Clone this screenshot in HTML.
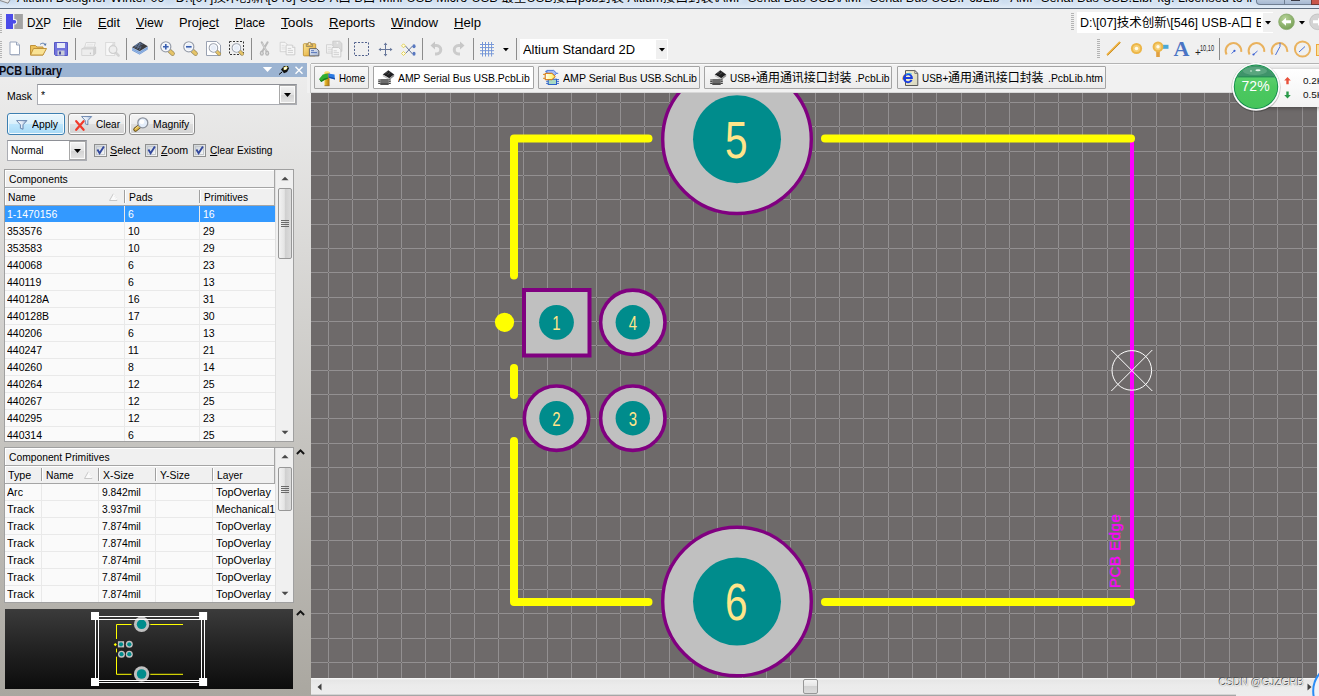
<!DOCTYPE html>
<html lang="zh"><head><meta charset="utf-8"><title>Altium Designer - PCB Library</title>
<style>
html,body{margin:0;padding:0}
body{width:1319px;height:696px;overflow:hidden;position:relative;background:#f0f0f0;font-family:"Liberation Sans","Noto Sans CJK SC",sans-serif;font-size:12px;color:#000}
.t{position:absolute;white-space:nowrap;line-height:16px;transform-origin:0 50%;display:block}
.abs{position:absolute}
svg{display:block;overflow:visible}
svg.cv{overflow:hidden}
svg text{font-family:"Liberation Sans","Noto Sans CJK SC",sans-serif}
u{text-decoration:underline;text-underline-offset:1px}
</style></head>
<body>
<div style="position:absolute;left:0px;top:0px;width:1319px;height:8px;background:linear-gradient(#c6d9ee,#e2ecf7);overflow:hidden"></div>
<div style="position:absolute;left:0px;top:8px;width:1319px;height:1px;background:#5f6e80"></div>
<div class="abs" style="left:0;top:0;width:1256px;height:8px;overflow:hidden"><span id="title" class="t" style="left:17px;top:-10.5px;font-size:12.5px;transform:scaleX(1.016);text-shadow:0 0 4px #fff,0 0 6px #fff">Altium Designer Winter 09 - D:\[07]技术创新\[546] USB-A口 B口 Mini-USB Micro-USB 最全USB接口pcb封装 Altium接口封装\AMP Serial Bus USB\AMP Serial Bus USB.PcbLib - AMP Serial Bus USB.LibPkg. Licensed to li</span></div>
<svg class="abs" style="left:0;top:0" width="14" height="7"><path d="M0 0.5L8 3.2L10 0" stroke="#888" fill="#e8e8e8" stroke-width="1"/></svg>
<div style="position:absolute;left:1256px;top:0px;width:29px;height:5px;background:linear-gradient(#b8c8dc,#a6b8d2);border:1px solid #6f7f93;border-top:none;border-radius:0 0 0 4px;box-sizing:border-box"></div>
<div style="position:absolute;left:1284px;top:0px;width:28px;height:5px;background:linear-gradient(#b8c8dc,#a6b8d2);border:1px solid #6f7f93;border-top:none;box-sizing:border-box"></div>
<div style="position:absolute;left:1311px;top:0px;width:12px;height:5px;background:#c8564a;border:1px solid #6f3a36;border-top:none;box-sizing:border-box"></div>
<div style="position:absolute;left:1291px;top:0px;width:9px;height:1px;background:#3a3a44"></div>
<svg class="abs" style="left:-1px;top:14px" width="3" height="19"><rect x="0" y="0" width="3" height="1" fill="#b4b4b4"/><rect x="0" y="2" width="3" height="1" fill="#b4b4b4"/><rect x="0" y="4" width="3" height="1" fill="#b4b4b4"/><rect x="0" y="6" width="3" height="1" fill="#b4b4b4"/><rect x="0" y="8" width="3" height="1" fill="#b4b4b4"/><rect x="0" y="10" width="3" height="1" fill="#b4b4b4"/><rect x="0" y="12" width="3" height="1" fill="#b4b4b4"/><rect x="0" y="14" width="3" height="1" fill="#b4b4b4"/><rect x="0" y="16" width="3" height="1" fill="#b4b4b4"/><rect x="0" y="18" width="3" height="1" fill="#b4b4b4"/></svg>
<svg class="abs" style="left:6px;top:14px" width="17" height="15"><rect x="8.3" y="0" width="8.6" height="15" fill="#a2a2a2"/><circle cx="8.4" cy="7.8" r="2.8" fill="#f4f4f4"/><rect x="0" y="0" width="7" height="15" fill="#4c4ce8"/><rect x="6.5" y="6.1" width="2.2" height="3.4" fill="#4c4ce8"/><circle cx="8.5" cy="7.8" r="1.7" fill="#4c4ce8"/></svg>
<span class="t" style="left:27.00px;top:14.77px;font-size:12.5px;transform:scaleX(0.9337);">D<u>X</u>P</span>
<span class="t" style="left:63.00px;top:14.77px;font-size:12.5px;transform:scaleX(0.9433);"><u>F</u>ile</span>
<span class="t" style="left:98.00px;top:14.77px;font-size:12.5px;transform:scaleX(1.0214);"><u>E</u>dit</span>
<span class="t" style="left:136.00px;top:14.77px;font-size:12.5px;transform:scaleX(1.0049);"><u>V</u>iew</span>
<span class="t" style="left:179.00px;top:14.77px;font-size:12.5px;transform:scaleX(1.0281);">Proje<u>c</u>t</span>
<span class="t" style="left:235.00px;top:14.77px;font-size:12.5px;transform:scaleX(0.9594);"><u>P</u>lace</span>
<span class="t" style="left:281.00px;top:14.77px;font-size:12.5px;transform:scaleX(1.0966);"><u>T</u>ools</span>
<span class="t" style="left:329.00px;top:14.77px;font-size:12.5px;transform:scaleX(1.0510);"><u>R</u>eports</span>
<span class="t" style="left:391.00px;top:14.77px;font-size:12.5px;transform:scaleX(1.0572);"><u>W</u>indow</span>
<span class="t" style="left:454.00px;top:14.77px;font-size:12.5px;transform:scaleX(1.0502);"><u>H</u>elp</span>
<svg class="abs" style="left:-1px;top:41px" width="3" height="18"><rect x="0" y="0" width="3" height="1" fill="#b4b4b4"/><rect x="0" y="2" width="3" height="1" fill="#b4b4b4"/><rect x="0" y="4" width="3" height="1" fill="#b4b4b4"/><rect x="0" y="6" width="3" height="1" fill="#b4b4b4"/><rect x="0" y="8" width="3" height="1" fill="#b4b4b4"/><rect x="0" y="10" width="3" height="1" fill="#b4b4b4"/><rect x="0" y="12" width="3" height="1" fill="#b4b4b4"/><rect x="0" y="14" width="3" height="1" fill="#b4b4b4"/><rect x="0" y="16" width="3" height="1" fill="#b4b4b4"/></svg>
<svg class="abs" style="left:9px;top:41px" width="12" height="15"><path d="M1 1h6.5l3 3v9.5h-9.5z" fill="#fff" stroke="#9aa6bc"/><path d="M7.5 1v3h3" fill="#e4eaf4" stroke="#9aa6bc"/><path d="M2 14.3h9" stroke="#c8ccd4"/></svg>
<svg class="abs" style="left:30px;top:42px" width="17" height="14"><path d="M0.5 13V3.5h5l1.5 1.5h6V13z" fill="#ecc058" stroke="#c0923a"/><path d="M0.5 13l3-6.5h13L13 13z" fill="#f9e294" stroke="#c0923a"/><path d="M10 2.5c2-2 4.5-1.5 5.5.5" stroke="#5577aa" fill="none"/><path d="M16.3 1l-.3 2.8-2.5-.8z" fill="#5577aa"/></svg>
<svg class="abs" style="left:54px;top:42px" width="14" height="14"><path d="M0.5 0.5h13v13h-12l-1-1z" fill="#7274dc" stroke="#5658c4"/><rect x="3" y="1" width="8" height="5" fill="#e8ecf8"/><rect x="3.5" y="8.5" width="7" height="5" fill="#c8ccd8"/><rect x="5" y="9.5" width="2" height="3" fill="#4a4fa0"/></svg>
<div style="position:absolute;left:75px;top:38px;width:1px;height:22px;background:#8c8c8c"></div>
<svg class="abs" style="left:81px;top:42px" width="16" height="15"><path d="M5 0.5H14.4L12.6 6.1H3.5z" fill="#f6f6f6" stroke="#d2d2d2" stroke-width="0.8"/><path d="M6 2.2h6.5M5.4 4h6.5" stroke="#dcdcdc" stroke-width="0.7"/><path d="M0.8 7L3.5 5.2H14.7L12.6 7z" fill="#e2e2e2" stroke="#cacaca" stroke-width="0.6"/><path d="M12.6 7L14.7 5.2V11.6L12.6 13.4z" fill="#d2d2d2" stroke="#c6c6c6" stroke-width="0.6"/><rect x="0.8" y="7" width="11.8" height="6.4" fill="#ededed" stroke="#cccccc" stroke-width="0.7"/><rect x="8.9" y="10.6" width="0.8" height="1.6" fill="#b0b0b0"/></svg>
<svg class="abs" style="left:105px;top:42px" width="16" height="15"><rect x="0.7" y="0.5" width="9.1" height="13" fill="#f7f7f7" stroke="#d6d6d6" stroke-width="0.8"/><path d="M11 10.8L13.6 13.6" stroke="#d4d4d4" stroke-width="2.6" stroke-linecap="round"/><circle cx="8" cy="7.6" r="3.9" fill="#eeeeee" stroke="#cdcdcd" stroke-width="1.2"/><circle cx="8.3" cy="2.4" r="1" fill="#e0e0e0" stroke="#d0d0d0" stroke-width="0.5"/></svg>
<div style="position:absolute;left:126px;top:38px;width:1px;height:22px;background:#8c8c8c"></div>
<svg class="abs" style="left:131px;top:41px" width="18" height="15"><path d="M1.1 6.2L8.6 10.2L16.8 5.3V8L8.6 13.2L1.1 9.2z" fill="#a4c2ea"/><path d="M1.1 7.6L8.6 11.6L16.8 6.7M1.1 9.2L8.6 13.2L16.8 8" stroke="#6d97d4" stroke-width="0.8" fill="none"/><path d="M1.1 6.2L9.2 0.8L16.8 5.3L8.6 10.2z" fill="#3a3b40"/><path d="M3 5L10.6 1.6M4.8 6L12.2 2.6M6.6 7L9.5 5.6M3.3 7.4L7 1.9M5.6 8.6L9.4 2M7.8 9.6L10.2 5.6" stroke="#7ea6e0" stroke-width="0.55" opacity="0.85"/></svg>
<div style="position:absolute;left:154px;top:38px;width:1px;height:22px;background:#8c8c8c"></div>
<svg class="abs" style="left:160px;top:41px" width="15" height="15"><path d="M9.6 9.8l3 2.9" stroke="#9a8a5a" stroke-width="4.4" stroke-linecap="round"/><path d="M9.6 9.8l3 2.9" stroke="#e6c468" stroke-width="3" stroke-linecap="round"/><circle cx="5.8" cy="5.8" r="5" fill="#e8eef8" stroke="#9aa0ac" stroke-width="1.3"/><circle cx="5.8" cy="5.8" r="3.9" fill="none" stroke="#fff" stroke-width="0.9"/><path d="M3 5.8h5.6M5.8 3v5.6" stroke="#3a5fb0" stroke-width="1.6"/></svg>
<svg class="abs" style="left:183px;top:41px" width="15" height="15"><path d="M9.6 9.8l3 2.9" stroke="#9a8a5a" stroke-width="4.4" stroke-linecap="round"/><path d="M9.6 9.8l3 2.9" stroke="#e6c468" stroke-width="3" stroke-linecap="round"/><circle cx="5.8" cy="5.8" r="5" fill="#e8eef8" stroke="#9aa0ac" stroke-width="1.3"/><circle cx="5.8" cy="5.8" r="3.9" fill="none" stroke="#fff" stroke-width="0.9"/><path d="M3 5.8h5.6" stroke="#3a5fb0" stroke-width="1.6"/></svg>
<svg class="abs" style="left:206px;top:41px" width="16" height="15"><path d="M0.5 0.5h10l4 3.5v10.5h-14z" fill="#fff" stroke="#9aa2b2"/><g transform="translate(2.5,2) scale(0.85)"><path d="M9.6 9.8l3 2.9" stroke="#9a8a5a" stroke-width="4.4" stroke-linecap="round"/><path d="M9.6 9.8l3 2.9" stroke="#e6c468" stroke-width="3" stroke-linecap="round"/><circle cx="5.8" cy="5.8" r="5" fill="#e8eef8" stroke="#9aa0ac" stroke-width="1.3"/><circle cx="5.8" cy="5.8" r="3.9" fill="none" stroke="#fff" stroke-width="0.9"/></g></svg>
<svg class="abs" style="left:229px;top:41px" width="16" height="15"><rect x="0.5" y="0.5" width="14" height="13" fill="none" stroke="#333" stroke-dasharray="2 1.5"/><g transform="translate(2.5,2) scale(0.85)"><path d="M9.6 9.8l3 2.9" stroke="#9a8a5a" stroke-width="4.4" stroke-linecap="round"/><path d="M9.6 9.8l3 2.9" stroke="#e6c468" stroke-width="3" stroke-linecap="round"/><circle cx="5.8" cy="5.8" r="5" fill="#e8eef8" stroke="#9aa0ac" stroke-width="1.3"/><circle cx="5.8" cy="5.8" r="3.9" fill="none" stroke="#fff" stroke-width="0.9"/></g></svg>
<div style="position:absolute;left:251px;top:38px;width:1px;height:22px;background:#8c8c8c"></div>
<svg class="abs" style="left:259px;top:41px" width="12" height="16"><path d="M2.7 1.3L7.9 11M8.6 1.3L3 11" stroke="#bababa" stroke-width="2" stroke-linecap="round"/><path d="M3.2 2.2L7.4 10" stroke="#e4e4e4" stroke-width="0.6"/><ellipse cx="2.8" cy="12.2" rx="2" ry="2.6" fill="#b6b6b6"/><ellipse cx="8.2" cy="12.2" rx="2" ry="2.6" fill="#b6b6b6"/><ellipse cx="2.8" cy="12.3" rx="0.8" ry="1.3" fill="#dcdcdc"/><ellipse cx="8.2" cy="12.3" rx="0.8" ry="1.3" fill="#dcdcdc"/></svg>
<svg class="abs" style="left:279px;top:41px" width="17" height="16"><path d="M1.2 1.3H6L8.1 3.4V10.7H1.2z" fill="#f5f5f5" stroke="#cbcbcb" stroke-width="0.8"/><path d="M2.6 4.4h3M2.6 6.2h4M2.6 8h4" stroke="#d6d6d6" stroke-width="0.7"/><path d="M7.1 4.1H13.4L15.8 6.5V13.8H7.1z" fill="#f7f7f7" stroke="#c4c4c4" stroke-width="0.8"/><path d="M13.4 4.1V6.5H15.8" fill="#e6e6e6" stroke="#c4c4c4" stroke-width="0.6"/><path d="M8.8 7.4h3.4M8.8 9.4h5.2M8.8 11.4h5.2" stroke="#c6c6c6" stroke-width="0.8"/></svg>
<svg class="abs" style="left:303px;top:41px" width="17" height="16"><defs><linearGradient id="pg" x1="0" y1="0" x2="1" y2="1"><stop offset="0" stop-color="#fde694"/><stop offset="1" stop-color="#dfa42e"/></linearGradient><linearGradient id="pd" x1="0" y1="0" x2="1" y2="1"><stop offset="0" stop-color="#eef2fa"/><stop offset="1" stop-color="#a4b4d0"/></linearGradient></defs><rect x="0.4" y="2.7" width="12.3" height="12.2" rx="0.8" fill="url(#pg)" stroke="#b98c2c" stroke-width="0.8"/><path d="M3.3 5.5V3.4H4.8L5.4 1.4H7.6L8.2 3.4H9.6V5.5z" fill="#e0b656" stroke="#8c7c5c" stroke-width="0.7"/><circle cx="6.5" cy="3" r="0.8" fill="#fff"/><path d="M6.4 7.6H13.6L15.9 9.8V14.9H6.4z" fill="url(#pd)" stroke="#5c5c60" stroke-width="0.9"/><path d="M8 9.7h3M8 11.6h6" stroke="#4a6ab4" stroke-width="0.9"/></svg>
<svg class="abs" style="left:326px;top:40px" width="17" height="18"><path d="M6.8 1.2H13.6L15.9 3.4V11.3H6.8z" fill="#dadada" stroke="#c6c6c6" stroke-width="0.8"/><circle cx="11.4" cy="2.8" r="0.9" fill="#f4f4f4"/><path d="M0.5 4.7H5.6L7.5 6.6V13.1H0.5z" fill="#f2f2f2" stroke="#cccccc" stroke-width="0.8"/><path d="M1.8 7.6h3M1.8 9.4h4.2M1.8 11.2h4.2" stroke="#d4d4d4" stroke-width="0.7"/><path d="M6.1 7.5H12.6L14.8 9.7V16.9H6.1z" fill="#f6f6f6" stroke="#c4c4c4" stroke-width="0.8"/><path d="M7.6 10.8h3.2M7.6 12.7h5.4M7.6 14.6h5.4" stroke="#c8c8c8" stroke-width="0.8"/></svg>
<div style="position:absolute;left:348px;top:38px;width:1px;height:22px;background:#8c8c8c"></div>
<svg class="abs" style="left:354px;top:42px" width="16" height="15"><rect x="0.5" y="0.5" width="14" height="13" fill="none" stroke="#50608c" stroke-dasharray="2 1.5"/></svg>
<svg class="abs" style="left:378px;top:41.5px" width="15" height="15"><path d="M7.5 1.5v12M1.5 7.5h12" stroke="#66769a" stroke-width="1"/><path d="M7.5 0.5l1.8 2.4h-3.6zM7.5 14.5l1.8-2.4h-3.6zM0.5 7.5l2.4-1.8v3.6zM14.5 7.5l-2.4-1.8v3.6z" fill="#66769a"/></svg>
<svg class="abs" style="left:400.5px;top:42.5px" width="16" height="15"><path d="M4.5 3l7 8M4.5 10.5l7-7.5" stroke="#66769a" stroke-width="1"/><path d="M2.5 0.8l2 2-2 2-2-2zM2.5 8.5l2 2-2 2-2-2z" fill="#fffbe0" stroke="#dcc838" stroke-width="0.8"/><ellipse cx="13" cy="3.2" rx="1.6" ry="2" fill="#5878c0"/><ellipse cx="13" cy="10.8" rx="1.6" ry="2" fill="#5878c0"/></svg>
<div style="position:absolute;left:422px;top:38px;width:1px;height:22px;background:#8c8c8c"></div>
<svg class="abs" style="left:430px;top:41.2px" width="12" height="14"><g opacity="0.8"><path d="M3 4.5h3.5a4 4 0 0 1 0 8.5H5" fill="none" stroke="#c2c2c2" stroke-width="3"/><path d="M0.5 4.5l4.5-4v8z" fill="#bdbdbd"/></g></svg>
<svg class="abs" style="left:453px;top:41.2px" width="12" height="14"><g opacity="0.8" transform="translate(12,0) scale(-1,1)"><path d="M3 4.5h3.5a4 4 0 0 1 0 8.5H5" fill="none" stroke="#c2c2c2" stroke-width="3"/><path d="M0.5 4.5l4.5-4v8z" fill="#bdbdbd"/></g></svg>
<div style="position:absolute;left:473px;top:38px;width:1px;height:22px;background:#8c8c8c"></div>
<svg class="abs" style="left:480px;top:42px" width="15" height="15"><rect x="0.5" y="0.5" width="13" height="13" fill="#fffdf2"/><path d="M2.5 0v14.5M5.5 0v14.5M8.6 0v14.5M11.6 0v14.5M0 2.5h14M0 5.6h14M0 8.7h14M0 11.8h14" stroke="#7696d8" stroke-width="1"/></svg>
<svg class="abs" style="left:502.6px;top:48px" width="6" height="4"><path d="M0 0h5.8l-2.9 3.2z" fill="#000"/></svg>
<div style="position:absolute;left:516px;top:38px;width:1px;height:22px;background:#8c8c8c"></div>
<div style="position:absolute;left:520px;top:39px;width:148px;height:21px;background:#fff"></div>
<span class="t" style="left:522.50px;top:41.57px;font-size:12.5px;transform:scaleX(1.0333);">Altium Standard 2D</span>
<div style="position:absolute;left:656px;top:40px;width:11px;height:19px;background:#f0f0f0"></div>
<svg class="abs" style="left:658.5px;top:48px" width="7" height="4"><path d="M0 0h6l-3 3.5z" fill="#000"/></svg>
<svg class="abs" style="left:1071px;top:13px" width="3" height="18"><rect x="0" y="0" width="3" height="1" fill="#b4b4b4"/><rect x="0" y="2" width="3" height="1" fill="#b4b4b4"/><rect x="0" y="4" width="3" height="1" fill="#b4b4b4"/><rect x="0" y="6" width="3" height="1" fill="#b4b4b4"/><rect x="0" y="8" width="3" height="1" fill="#b4b4b4"/><rect x="0" y="10" width="3" height="1" fill="#b4b4b4"/><rect x="0" y="12" width="3" height="1" fill="#b4b4b4"/><rect x="0" y="14" width="3" height="1" fill="#b4b4b4"/><rect x="0" y="16" width="3" height="1" fill="#b4b4b4"/></svg>
<div style="position:absolute;left:1077px;top:12px;width:196px;height:21px;background:#fff"></div>
<div class="abs" style="left:1077px;top:12px;width:184px;height:21px;overflow:hidden"><span class="t" style="left:3.00px;top:2.57px;font-size:12.5px;">D:\[07]技术创新\[546] USB-A口 B口</span></div>
<div style="position:absolute;left:1263px;top:13px;width:10px;height:19px;background:#f0f0f0"></div>
<svg class="abs" style="left:1264.5px;top:20.5px" width="6" height="4"><path d="M0 0h6l-3 3.5z" fill="#000"/></svg>
<svg class="abs" style="left:1277.6px;top:13.2px" width="17" height="17"><defs><radialGradient id="gb" cx="0.4" cy="0.3" r="0.8"><stop offset="0" stop-color="#b8d49a"/><stop offset="1" stop-color="#6f9a4e"/></radialGradient></defs><circle cx="8.5" cy="8.8" r="7.8" fill="url(#gb)" stroke="#86a86a" stroke-width="0.8"/><path d="M3.5 8.8l4.5-4v2.5h5v3H8v2.5z" fill="#fff"/></svg>
<svg class="abs" style="left:1298.6px;top:20.5px" width="6" height="4"><path d="M0 0h6l-3 3.5z" fill="#000"/></svg>
<svg class="abs" style="left:1309px;top:13.2px" width="11" height="17"><circle cx="8.5" cy="8.8" r="7.8" fill="#d4d4d4" stroke="#bcbcbc" stroke-width="0.8"/><path d="M13.5 8.8l-4.5-4v2.5h-5v3h5v2.5z" fill="#fff"/></svg>
<svg class="abs" style="left:1097px;top:39px" width="3" height="19"><rect x="0" y="0" width="3" height="1" fill="#b4b4b4"/><rect x="0" y="2" width="3" height="1" fill="#b4b4b4"/><rect x="0" y="4" width="3" height="1" fill="#b4b4b4"/><rect x="0" y="6" width="3" height="1" fill="#b4b4b4"/><rect x="0" y="8" width="3" height="1" fill="#b4b4b4"/><rect x="0" y="10" width="3" height="1" fill="#b4b4b4"/><rect x="0" y="12" width="3" height="1" fill="#b4b4b4"/><rect x="0" y="14" width="3" height="1" fill="#b4b4b4"/><rect x="0" y="16" width="3" height="1" fill="#b4b4b4"/><rect x="0" y="18" width="3" height="1" fill="#b4b4b4"/></svg>
<svg class="abs" style="left:1106px;top:41px" width="15" height="15"><path d="M1 14L14 1" stroke="#eeb040" stroke-width="2"/><path d="M1.5 14.5L14.5 1.5" stroke="#b07810" stroke-width="0.6"/></svg>
<svg class="abs" style="left:1129.5px;top:42.3px" width="13" height="13"><circle cx="6.5" cy="6.5" r="5.6" fill="#ecb648"/><circle cx="6.5" cy="6.5" r="3.6" fill="#f6d078"/><circle cx="6.5" cy="6.5" r="1.8" fill="#fffbea"/></svg>
<svg class="abs" style="left:1151.5px;top:41px" width="18" height="16"><rect x="4.2" y="9" width="3.6" height="7" fill="#e0a040"/><rect x="9" y="3.8" width="7.5" height="4" fill="#4aa8d8"/><circle cx="6" cy="5.8" r="5.4" fill="#ecb648"/><circle cx="6" cy="5.8" r="3.4" fill="#f6d078"/><circle cx="6" cy="5.8" r="1.7" fill="#fffbea"/></svg>
<span class="t" style="left:1173.50px;top:37.18px;font-size:22px;color:#4a74c4;font-weight:bold;line-height:24px;font-family:'Liberation Serif',serif;">A</span>
<span class="t" style="left:1195.00px;top:45.33px;font-size:10px;color:#222;">+</span>
<span class="t" style="left:1200.30px;top:40.25px;font-size:8.5px;transform:scaleX(0.6582);color:#222;">10,10</span>
<div style="position:absolute;left:1219px;top:38px;width:1px;height:22px;background:#8c8c8c"></div>
<svg class="abs" style="left:1224.3px;top:40.5px" width="19" height="18"><path d="M2.6 13.6A7.8 7.8 0 1 1 17.2 10.8" fill="none" stroke="#e9b25e" stroke-width="2"/><path d="M7.5 12.5L10.5 9.8" stroke="#4a6fd8" stroke-width="1"/><circle cx="10.5" cy="9.8" r="1.1" fill="#3a5fd0"/></svg>
<svg class="abs" style="left:1247.3px;top:40.5px" width="19" height="18"><path d="M2.6 13.6A7.8 7.8 0 1 1 17.2 10.8" fill="none" stroke="#e9b25e" stroke-width="2"/><path d="M6.5 13.5L10.5 10" stroke="#4a6fd8" stroke-width="1"/><circle cx="6.5" cy="13.5" r="1.1" fill="#3a5fd0"/></svg>
<svg class="abs" style="left:1270.3px;top:40.5px" width="19" height="18"><path d="M2.6 13.6A7.8 7.8 0 1 1 17.2 10.8" fill="none" stroke="#e9b25e" stroke-width="2"/><path d="M5.5 14L10 5.5" stroke="#4a6fd8" stroke-width="1"/><path d="M10 5.5V1.8" stroke="#4a6fd8" stroke-width="1"/></svg>
<svg class="abs" style="left:1292.8px;top:40px" width="19" height="18"><circle cx="9.5" cy="9" r="7.6" fill="none" stroke="#e9b25e" stroke-width="2"/><path d="M6 12L12 6.5" stroke="#4a6fd8" stroke-width="1"/></svg>
<svg class="abs" style="left:1316px;top:44px" width="3" height="12"><rect x="0.5" y="0.5" width="6" height="11" fill="#f8e0a0" stroke="#eea83c"/></svg>
<div style="position:absolute;left:0px;top:63px;width:311px;height:633px;background:linear-gradient(#eeeeee,#aaa7a0)"></div>
<div style="position:absolute;left:307px;top:63px;width:4px;height:30px;background:#f1f1f1"></div>
<div style="position:absolute;left:310px;top:64px;width:1px;height:29px;background:#c9c9c9"></div>
<div style="position:absolute;left:0px;top:63px;width:307px;height:14px;background:#9cb4d2"></div>
<span class="t" style="left:-1.50px;top:62.57px;font-size:12.5px;transform:scaleX(0.8721);color:#0a0a14;font-weight:bold;">PCB Library</span>
<svg class="abs" style="left:262px;top:66.2px" width="42" height="11"><path d="M0.8 1h9.4L5.5 6z" fill="#fff"/><path d="M33.5 0.8l7 7M40.5 0.8l-7 7" stroke="#fff" stroke-width="1.4"/><g transform="translate(17,-1)"><path d="M0 9.5L3 7" stroke="#000" stroke-width="1"/><path d="M2 4.5l3-3.5h4l1 2.5-2 3.5-3 1.2z" fill="#111"/><path d="M4.5 2.2l3-1.2 1.3 1.6-1.5 2.2-2.6.4z" fill="#e8e070"/><path d="M5 2.8l2.2-.8.8 1-1 1.3-1.8.2z" fill="#fff"/></g></svg>
<span class="t" style="left:7.00px;top:87.89px;font-size:11px;transform:scaleX(0.9512);">Mask</span>
<div style="position:absolute;left:37px;top:84px;width:260px;height:21px;box-sizing:border-box;border:1px solid #abadb3;border-top-color:#8e9096;background:#fff"></div>
<span class="t" style="left:41.00px;top:86.69px;font-size:11px;transform:scaleX(0.9500);">*</span>
<div style="position:absolute;left:279px;top:85px;width:17px;height:19px;box-sizing:border-box;border:1px solid #a8a8a8;background:linear-gradient(#f4f4f4,#e2e2e2 50%,#d2d2d2 51%,#e4e4e4);box-shadow:inset 0 0 0 1px #fafafa"></div>
<svg class="abs" style="left:284px;top:93px" width="7" height="4"><path d="M0 0h7l-3.5 4z" fill="#000"/></svg>
<div style="position:absolute;left:7px;top:113px;width:58px;height:22px;box-sizing:border-box;border:1px solid #3c7fb1;border-radius:3px;background:linear-gradient(#eaf6fd,#d9f0fc 48%,#bee6fd 52%,#a7d9f5);box-shadow:inset 0 0 0 1px #f4fbfe;"></div>
<div style="position:absolute;left:68px;top:113px;width:58px;height:22px;box-sizing:border-box;border:1px solid #8a8a8a;border-radius:3px;background:linear-gradient(#f4f4f4,#ececec 48%,#dedede 52%,#d2d2d2);box-shadow:inset 0 0 0 1px #fbfbfb;"></div>
<div style="position:absolute;left:129px;top:113px;width:66px;height:22px;box-sizing:border-box;border:1px solid #8a8a8a;border-radius:3px;background:linear-gradient(#f4f4f4,#ececec 48%,#dedede 52%,#d2d2d2);box-shadow:inset 0 0 0 1px #fbfbfb;"></div>
<span class="t" style="left:32.00px;top:116.09px;font-size:11px;transform:scaleX(0.9449);">Apply</span>
<span class="t" style="left:96.30px;top:116.09px;font-size:11px;transform:scaleX(0.9130);">Clear</span>
<span class="t" style="left:152.50px;top:116.09px;font-size:11px;transform:scaleX(0.9424);">Magnify</span>
<svg class="abs" style="left:0;top:0" width="0" height="0"><defs><linearGradient id="fg" x1="0" x2="1"><stop offset="0" stop-color="#ffffff"/><stop offset="0.55" stop-color="#dfe9f6"/><stop offset="1" stop-color="#8fabd2"/></linearGradient></defs></svg>
<svg class="abs" style="left:16px;top:120.3px" width="12" height="11"><path d="M0.6 0.6h10.3L7 4.8v4.4l-2.6-.9V4.8z" fill="url(#fg)" stroke="#5c7aa6" stroke-width="0.9" stroke-linejoin="round"/></svg>
<svg class="abs" style="left:81px;top:116px" width="12" height="10"><g transform="scale(0.98 0.95)"><path d="M0.6 0.6h10.3L7 4.8v4.4l-2.6-.9V4.8z" fill="url(#fg)" stroke="#5c7aa6" stroke-width="0.9" stroke-linejoin="round"/></g></svg>
<svg class="abs" style="left:74.5px;top:119.6px" width="10" height="11"><path d="M1.2 1.2L8.6 9.8M8.6 1.2L1.2 9.8" stroke="#f03a2c" stroke-width="2.2" stroke-linecap="round"/></svg>
<svg class="abs" style="left:133px;top:116px" width="17" height="16"><path d="M6.4 10.3L2.4 13.5" stroke="#5a4410" stroke-width="4.2" stroke-linecap="round"/><path d="M6.6 10.1L2.6 13.3" stroke="#e0b848" stroke-width="2.8" stroke-linecap="round"/><path d="M6.2 9.6L2.6 12.4" stroke="#f6e29a" stroke-width="0.9" stroke-linecap="round"/><circle cx="9.8" cy="6.8" r="5" fill="#e4eefb" stroke="#8c929c" stroke-width="1.3"/><circle cx="9" cy="5.8" r="2.4" fill="#ffffff"/></svg>
<div style="position:absolute;left:7px;top:140px;width:80px;height:21px;box-sizing:border-box;border:1px solid #abadb3;border-top-color:#8e9096;background:#fff"></div>
<span class="t" style="left:10.60px;top:141.89px;font-size:11px;transform:scaleX(0.9168);">Normal</span>
<div style="position:absolute;left:69px;top:141px;width:17px;height:19px;box-sizing:border-box;border:1px solid #a8a8a8;background:linear-gradient(#f4f4f4,#e2e2e2 50%,#d2d2d2 51%,#e4e4e4);box-shadow:inset 0 0 0 1px #fafafa"></div>
<svg class="abs" style="left:74px;top:149px" width="7" height="4"><path d="M0 0h7l-3.5 4z" fill="#000"/></svg>
<div style="position:absolute;left:94px;top:144px;width:13px;height:13px;box-sizing:border-box;border:1px solid #8e8f8f;background:linear-gradient(135deg,#d0d4d8,#f4f5f6);"></div><div style="position:absolute;left:96px;top:146px;width:9px;height:9px;box-sizing:border-box;border:1px solid #c4c8cc;background:linear-gradient(135deg,#cfd5da,#f6f7f8)"></div><svg class="abs" style="left:96px;top:146px" width="9" height="9"><path d="M1.4 3.6L3.6 7.2L7.9 0.6" stroke="#33489c" stroke-width="1.9" fill="none"/></svg>
<span class="t" style="left:110.00px;top:142.42px;font-size:11.5px;transform:scaleX(0.9386);"><u>S</u>elect</span>
<div style="position:absolute;left:145px;top:144px;width:13px;height:13px;box-sizing:border-box;border:1px solid #8e8f8f;background:linear-gradient(135deg,#d0d4d8,#f4f5f6);"></div><div style="position:absolute;left:147px;top:146px;width:9px;height:9px;box-sizing:border-box;border:1px solid #c4c8cc;background:linear-gradient(135deg,#cfd5da,#f6f7f8)"></div><svg class="abs" style="left:147px;top:146px" width="9" height="9"><path d="M1.4 3.6L3.6 7.2L7.9 0.6" stroke="#33489c" stroke-width="1.9" fill="none"/></svg>
<span class="t" style="left:160.80px;top:142.42px;font-size:11.5px;transform:scaleX(0.9253);"><u>Z</u>oom</span>
<div style="position:absolute;left:193px;top:144px;width:13px;height:13px;box-sizing:border-box;border:1px solid #8e8f8f;background:linear-gradient(135deg,#d0d4d8,#f4f5f6);"></div><div style="position:absolute;left:195px;top:146px;width:9px;height:9px;box-sizing:border-box;border:1px solid #c4c8cc;background:linear-gradient(135deg,#cfd5da,#f6f7f8)"></div><svg class="abs" style="left:195px;top:146px" width="9" height="9"><path d="M1.4 3.6L3.6 7.2L7.9 0.6" stroke="#33489c" stroke-width="1.9" fill="none"/></svg>
<span class="t" style="left:209.50px;top:142.42px;font-size:11.5px;transform:scaleX(0.8810);"><u>C</u>lear Existing</span>
<div style="position:absolute;left:4px;top:169px;width:290px;height:273px;box-sizing:border-box;border:1px solid #a0a0a0;background:#fafafa;overflow:hidden"></div>
<div style="position:absolute;left:5px;top:170px;width:270px;height:18px;background:#f0f0f0;box-sizing:border-box;border-bottom:1px solid #a5a5a5;border-right:1px solid #a5a5a5;box-shadow:inset 1px 1px 0 #fff"></div>
<span class="t" style="left:8.50px;top:170.59px;font-size:11px;transform:scaleX(0.9411);">Components</span>
<div style="position:absolute;left:5px;top:188px;width:270px;height:18px;background:#f0f0f0;box-sizing:border-box;border-bottom:1px solid #a5a5a5;border-right:1px solid #a5a5a5;box-shadow:inset 1px 1px 0 #fff"></div>
<span class="t" style="left:8.10px;top:188.89px;font-size:11px;transform:scaleX(0.9372);">Name</span>
<div style="position:absolute;left:124px;top:190px;width:1px;height:13px;background:#a0a0a0"></div>
<div style="position:absolute;left:125px;top:190px;width:1px;height:13px;background:#fff"></div>
<span class="t" style="left:128.50px;top:188.89px;font-size:11px;transform:scaleX(0.9452);">Pads</span>
<div style="position:absolute;left:199px;top:190px;width:1px;height:13px;background:#a0a0a0"></div>
<div style="position:absolute;left:200px;top:190px;width:1px;height:13px;background:#fff"></div>
<span class="t" style="left:203.50px;top:188.89px;font-size:11px;transform:scaleX(0.9230);">Primitives</span>
<svg class="abs" style="left:109px;top:193px" width="9" height="8"><path d="M4.5 0.5L8.5 7.5H0.5z" fill="#fafafa" stroke="#c8c8c8" stroke-width="1"/><path d="M4.5 0.5L8.5 7.5" stroke="#fff" stroke-width="1"/></svg>
<div style="position:absolute;left:5px;top:206px;width:270px;height:16px;background:#3399ff;overflow:hidden;"></div>
<span class="t" style="left:7.00px;top:205.79px;font-size:11px;transform:scaleX(0.9550);color:#fff;">1-1470156</span>
<div style="position:absolute;left:124px;top:206px;width:1px;height:17px;background:#e9e9e9"></div>
<span class="t" style="left:127.80px;top:205.79px;font-size:11px;transform:scaleX(0.9550);color:#fff;">6</span>
<div style="position:absolute;left:199px;top:206px;width:1px;height:17px;background:#e9e9e9"></div>
<span class="t" style="left:202.80px;top:205.79px;font-size:11px;transform:scaleX(0.9550);color:#fff;">16</span>
<div style="position:absolute;left:5px;top:223px;width:270px;height:17px;background:#fafafa;overflow:hidden;"></div>
<div style="position:absolute;left:5px;top:239px;width:270px;height:1px;background:#e9e9e9"></div>
<span class="t" style="left:7.00px;top:222.79px;font-size:11px;transform:scaleX(0.9550);color:#000;">353576</span>
<div style="position:absolute;left:124px;top:223px;width:1px;height:17px;background:#e9e9e9"></div>
<span class="t" style="left:127.80px;top:222.79px;font-size:11px;transform:scaleX(0.9550);color:#000;">10</span>
<div style="position:absolute;left:199px;top:223px;width:1px;height:17px;background:#e9e9e9"></div>
<span class="t" style="left:202.80px;top:222.79px;font-size:11px;transform:scaleX(0.9550);color:#000;">29</span>
<div style="position:absolute;left:5px;top:240px;width:270px;height:17px;background:#fafafa;overflow:hidden;"></div>
<div style="position:absolute;left:5px;top:256px;width:270px;height:1px;background:#e9e9e9"></div>
<span class="t" style="left:7.00px;top:239.79px;font-size:11px;transform:scaleX(0.9550);color:#000;">353583</span>
<div style="position:absolute;left:124px;top:240px;width:1px;height:17px;background:#e9e9e9"></div>
<span class="t" style="left:127.80px;top:239.79px;font-size:11px;transform:scaleX(0.9550);color:#000;">10</span>
<div style="position:absolute;left:199px;top:240px;width:1px;height:17px;background:#e9e9e9"></div>
<span class="t" style="left:202.80px;top:239.79px;font-size:11px;transform:scaleX(0.9550);color:#000;">29</span>
<div style="position:absolute;left:5px;top:257px;width:270px;height:17px;background:#fafafa;overflow:hidden;"></div>
<div style="position:absolute;left:5px;top:273px;width:270px;height:1px;background:#e9e9e9"></div>
<span class="t" style="left:7.00px;top:256.79px;font-size:11px;transform:scaleX(0.9550);color:#000;">440068</span>
<div style="position:absolute;left:124px;top:257px;width:1px;height:17px;background:#e9e9e9"></div>
<span class="t" style="left:127.80px;top:256.79px;font-size:11px;transform:scaleX(0.9550);color:#000;">6</span>
<div style="position:absolute;left:199px;top:257px;width:1px;height:17px;background:#e9e9e9"></div>
<span class="t" style="left:202.80px;top:256.79px;font-size:11px;transform:scaleX(0.9550);color:#000;">23</span>
<div style="position:absolute;left:5px;top:274px;width:270px;height:17px;background:#fafafa;overflow:hidden;"></div>
<div style="position:absolute;left:5px;top:290px;width:270px;height:1px;background:#e9e9e9"></div>
<span class="t" style="left:7.00px;top:273.79px;font-size:11px;transform:scaleX(0.9550);color:#000;">440119</span>
<div style="position:absolute;left:124px;top:274px;width:1px;height:17px;background:#e9e9e9"></div>
<span class="t" style="left:127.80px;top:273.79px;font-size:11px;transform:scaleX(0.9550);color:#000;">6</span>
<div style="position:absolute;left:199px;top:274px;width:1px;height:17px;background:#e9e9e9"></div>
<span class="t" style="left:202.80px;top:273.79px;font-size:11px;transform:scaleX(0.9550);color:#000;">13</span>
<div style="position:absolute;left:5px;top:291px;width:270px;height:17px;background:#fafafa;overflow:hidden;"></div>
<div style="position:absolute;left:5px;top:307px;width:270px;height:1px;background:#e9e9e9"></div>
<span class="t" style="left:7.00px;top:290.79px;font-size:11px;transform:scaleX(0.9550);color:#000;">440128A</span>
<div style="position:absolute;left:124px;top:291px;width:1px;height:17px;background:#e9e9e9"></div>
<span class="t" style="left:127.80px;top:290.79px;font-size:11px;transform:scaleX(0.9550);color:#000;">16</span>
<div style="position:absolute;left:199px;top:291px;width:1px;height:17px;background:#e9e9e9"></div>
<span class="t" style="left:202.80px;top:290.79px;font-size:11px;transform:scaleX(0.9550);color:#000;">31</span>
<div style="position:absolute;left:5px;top:308px;width:270px;height:17px;background:#fafafa;overflow:hidden;"></div>
<div style="position:absolute;left:5px;top:324px;width:270px;height:1px;background:#e9e9e9"></div>
<span class="t" style="left:7.00px;top:307.79px;font-size:11px;transform:scaleX(0.9550);color:#000;">440128B</span>
<div style="position:absolute;left:124px;top:308px;width:1px;height:17px;background:#e9e9e9"></div>
<span class="t" style="left:127.80px;top:307.79px;font-size:11px;transform:scaleX(0.9550);color:#000;">17</span>
<div style="position:absolute;left:199px;top:308px;width:1px;height:17px;background:#e9e9e9"></div>
<span class="t" style="left:202.80px;top:307.79px;font-size:11px;transform:scaleX(0.9550);color:#000;">30</span>
<div style="position:absolute;left:5px;top:325px;width:270px;height:17px;background:#fafafa;overflow:hidden;"></div>
<div style="position:absolute;left:5px;top:341px;width:270px;height:1px;background:#e9e9e9"></div>
<span class="t" style="left:7.00px;top:324.79px;font-size:11px;transform:scaleX(0.9550);color:#000;">440206</span>
<div style="position:absolute;left:124px;top:325px;width:1px;height:17px;background:#e9e9e9"></div>
<span class="t" style="left:127.80px;top:324.79px;font-size:11px;transform:scaleX(0.9550);color:#000;">6</span>
<div style="position:absolute;left:199px;top:325px;width:1px;height:17px;background:#e9e9e9"></div>
<span class="t" style="left:202.80px;top:324.79px;font-size:11px;transform:scaleX(0.9550);color:#000;">13</span>
<div style="position:absolute;left:5px;top:342px;width:270px;height:17px;background:#fafafa;overflow:hidden;"></div>
<div style="position:absolute;left:5px;top:358px;width:270px;height:1px;background:#e9e9e9"></div>
<span class="t" style="left:7.00px;top:341.79px;font-size:11px;transform:scaleX(0.9550);color:#000;">440247</span>
<div style="position:absolute;left:124px;top:342px;width:1px;height:17px;background:#e9e9e9"></div>
<span class="t" style="left:127.80px;top:341.79px;font-size:11px;transform:scaleX(0.9550);color:#000;">11</span>
<div style="position:absolute;left:199px;top:342px;width:1px;height:17px;background:#e9e9e9"></div>
<span class="t" style="left:202.80px;top:341.79px;font-size:11px;transform:scaleX(0.9550);color:#000;">21</span>
<div style="position:absolute;left:5px;top:359px;width:270px;height:17px;background:#fafafa;overflow:hidden;"></div>
<div style="position:absolute;left:5px;top:375px;width:270px;height:1px;background:#e9e9e9"></div>
<span class="t" style="left:7.00px;top:358.79px;font-size:11px;transform:scaleX(0.9550);color:#000;">440260</span>
<div style="position:absolute;left:124px;top:359px;width:1px;height:17px;background:#e9e9e9"></div>
<span class="t" style="left:127.80px;top:358.79px;font-size:11px;transform:scaleX(0.9550);color:#000;">8</span>
<div style="position:absolute;left:199px;top:359px;width:1px;height:17px;background:#e9e9e9"></div>
<span class="t" style="left:202.80px;top:358.79px;font-size:11px;transform:scaleX(0.9550);color:#000;">14</span>
<div style="position:absolute;left:5px;top:376px;width:270px;height:17px;background:#fafafa;overflow:hidden;"></div>
<div style="position:absolute;left:5px;top:392px;width:270px;height:1px;background:#e9e9e9"></div>
<span class="t" style="left:7.00px;top:375.79px;font-size:11px;transform:scaleX(0.9550);color:#000;">440264</span>
<div style="position:absolute;left:124px;top:376px;width:1px;height:17px;background:#e9e9e9"></div>
<span class="t" style="left:127.80px;top:375.79px;font-size:11px;transform:scaleX(0.9550);color:#000;">12</span>
<div style="position:absolute;left:199px;top:376px;width:1px;height:17px;background:#e9e9e9"></div>
<span class="t" style="left:202.80px;top:375.79px;font-size:11px;transform:scaleX(0.9550);color:#000;">25</span>
<div style="position:absolute;left:5px;top:393px;width:270px;height:17px;background:#fafafa;overflow:hidden;"></div>
<div style="position:absolute;left:5px;top:409px;width:270px;height:1px;background:#e9e9e9"></div>
<span class="t" style="left:7.00px;top:392.79px;font-size:11px;transform:scaleX(0.9550);color:#000;">440267</span>
<div style="position:absolute;left:124px;top:393px;width:1px;height:17px;background:#e9e9e9"></div>
<span class="t" style="left:127.80px;top:392.79px;font-size:11px;transform:scaleX(0.9550);color:#000;">12</span>
<div style="position:absolute;left:199px;top:393px;width:1px;height:17px;background:#e9e9e9"></div>
<span class="t" style="left:202.80px;top:392.79px;font-size:11px;transform:scaleX(0.9550);color:#000;">25</span>
<div style="position:absolute;left:5px;top:410px;width:270px;height:17px;background:#fafafa;overflow:hidden;"></div>
<div style="position:absolute;left:5px;top:426px;width:270px;height:1px;background:#e9e9e9"></div>
<span class="t" style="left:7.00px;top:409.79px;font-size:11px;transform:scaleX(0.9550);color:#000;">440295</span>
<div style="position:absolute;left:124px;top:410px;width:1px;height:17px;background:#e9e9e9"></div>
<span class="t" style="left:127.80px;top:409.79px;font-size:11px;transform:scaleX(0.9550);color:#000;">12</span>
<div style="position:absolute;left:199px;top:410px;width:1px;height:17px;background:#e9e9e9"></div>
<span class="t" style="left:202.80px;top:409.79px;font-size:11px;transform:scaleX(0.9550);color:#000;">23</span>
<div style="position:absolute;left:5px;top:427px;width:270px;height:14px;background:#fafafa;overflow:hidden;"></div>
<span class="t" style="left:7.00px;top:426.79px;font-size:11px;transform:scaleX(0.9550);color:#000;">440314</span>
<div style="position:absolute;left:124px;top:427px;width:1px;height:14px;background:#e9e9e9"></div>
<span class="t" style="left:127.80px;top:426.79px;font-size:11px;transform:scaleX(0.9550);color:#000;">6</span>
<div style="position:absolute;left:199px;top:427px;width:1px;height:14px;background:#e9e9e9"></div>
<span class="t" style="left:202.80px;top:426.79px;font-size:11px;transform:scaleX(0.9550);color:#000;">25</span>
<div style="position:absolute;left:275px;top:170px;width:1px;height:271px;background:#e0e0e0"></div>
<div style="position:absolute;left:276px;top:170px;width:17px;height:271px;background:#f0f0f0"></div><svg class="abs" style="left:281px;top:176px" width="8" height="5"><path d="M0.4 4.3L4 0.7L7.6 4.3z" fill="#4a4a4a"/></svg><svg class="abs" style="left:281px;top:430px" width="8" height="5"><path d="M0.6 0.8L4 4.2L7.4 0.8z" fill="#4a4a4a"/></svg><div style="position:absolute;left:278px;top:188px;width:14px;height:71px;box-sizing:border-box;border:1px solid #979797;border-radius:2px;background:linear-gradient(90deg,#f2f2f2,#e4e4e4 45%,#cfcfcf 50%,#dcdcdc)"></div><div style="position:absolute;left:281px;top:219.5px;width:8px;height:1px;background:#6a6a6a"></div><div style="position:absolute;left:281px;top:221.5px;width:8px;height:1px;background:#6a6a6a"></div><div style="position:absolute;left:281px;top:223.5px;width:8px;height:1px;background:#6a6a6a"></div><div style="position:absolute;left:281px;top:225.5px;width:8px;height:1px;background:#6a6a6a"></div>
<div style="position:absolute;left:4px;top:447px;width:290px;height:156px;box-sizing:border-box;border:1px solid #a0a0a0;background:#fafafa;overflow:hidden"></div>
<div style="position:absolute;left:5px;top:448px;width:270px;height:18px;background:#f0f0f0;box-sizing:border-box;border-bottom:1px solid #a5a5a5;border-right:1px solid #a5a5a5;box-shadow:inset 1px 1px 0 #fff"></div>
<span class="t" style="left:8.50px;top:448.59px;font-size:11px;transform:scaleX(0.9350);">Component Primitives</span>
<div style="position:absolute;left:5px;top:466px;width:270px;height:18px;background:#f0f0f0;box-sizing:border-box;border-bottom:1px solid #a5a5a5;border-right:1px solid #a5a5a5;box-shadow:inset 1px 1px 0 #fff"></div>
<span class="t" style="left:8.10px;top:466.89px;font-size:11px;transform:scaleX(0.9770);">Type</span>
<div style="position:absolute;left:41px;top:468px;width:1px;height:13px;background:#a0a0a0"></div>
<div style="position:absolute;left:42px;top:468px;width:1px;height:13px;background:#fff"></div>
<span class="t" style="left:45.50px;top:466.89px;font-size:11px;transform:scaleX(0.9372);">Name</span>
<div style="position:absolute;left:98px;top:468px;width:1px;height:13px;background:#a0a0a0"></div>
<div style="position:absolute;left:99px;top:468px;width:1px;height:13px;background:#fff"></div>
<span class="t" style="left:102.50px;top:466.89px;font-size:11px;transform:scaleX(0.9506);">X-Size</span>
<div style="position:absolute;left:155px;top:468px;width:1px;height:13px;background:#a0a0a0"></div>
<div style="position:absolute;left:156px;top:468px;width:1px;height:13px;background:#fff"></div>
<span class="t" style="left:159.50px;top:466.89px;font-size:11px;transform:scaleX(0.9461);">Y-Size</span>
<div style="position:absolute;left:212px;top:468px;width:1px;height:13px;background:#a0a0a0"></div>
<div style="position:absolute;left:213px;top:468px;width:1px;height:13px;background:#fff"></div>
<span class="t" style="left:216.50px;top:466.89px;font-size:11px;transform:scaleX(0.9303);">Layer</span>
<svg class="abs" style="left:84px;top:471px" width="9" height="8"><path d="M4.5 0.5L8.5 7.5H0.5z" fill="#fafafa" stroke="#c8c8c8" stroke-width="1"/><path d="M4.5 0.5L8.5 7.5" stroke="#fff" stroke-width="1"/></svg>
<div style="position:absolute;left:5px;top:484px;width:270px;height:17px;background:#fafafa;overflow:hidden;"></div>
<div style="position:absolute;left:5px;top:500px;width:270px;height:1px;background:#e9e9e9"></div>
<span class="t" style="left:7.00px;top:483.79px;font-size:11px;transform:scaleX(0.9696);color:#000;">Arc</span>
<div style="position:absolute;left:41px;top:484px;width:1px;height:17px;background:#e9e9e9"></div>
<div style="position:absolute;left:98px;top:484px;width:1px;height:17px;background:#e9e9e9"></div>
<span class="t" style="left:101.80px;top:483.79px;font-size:11px;transform:scaleX(0.9332);color:#000;">9.842mil</span>
<div style="position:absolute;left:155px;top:484px;width:1px;height:17px;background:#e9e9e9"></div>
<div style="position:absolute;left:212px;top:484px;width:1px;height:17px;background:#e9e9e9"></div>
<span class="t" style="left:215.80px;top:483.79px;font-size:11px;transform:scaleX(0.9850);color:#000;">TopOverlay</span>
<div style="position:absolute;left:5px;top:501px;width:270px;height:17px;background:#fafafa;overflow:hidden;"></div>
<div style="position:absolute;left:5px;top:517px;width:270px;height:1px;background:#e9e9e9"></div>
<span class="t" style="left:7.00px;top:500.79px;font-size:11px;transform:scaleX(1.0040);color:#000;">Track</span>
<div style="position:absolute;left:41px;top:501px;width:1px;height:17px;background:#e9e9e9"></div>
<div style="position:absolute;left:98px;top:501px;width:1px;height:17px;background:#e9e9e9"></div>
<span class="t" style="left:101.80px;top:500.79px;font-size:11px;transform:scaleX(0.9332);color:#000;">3.937mil</span>
<div style="position:absolute;left:155px;top:501px;width:1px;height:17px;background:#e9e9e9"></div>
<div style="position:absolute;left:212px;top:501px;width:1px;height:17px;background:#e9e9e9"></div>
<span class="t" style="left:215.80px;top:500.79px;font-size:11px;transform:scaleX(0.9586);color:#000;">Mechanical1</span>
<div style="position:absolute;left:5px;top:518px;width:270px;height:17px;background:#fafafa;overflow:hidden;"></div>
<div style="position:absolute;left:5px;top:534px;width:270px;height:1px;background:#e9e9e9"></div>
<span class="t" style="left:7.00px;top:517.79px;font-size:11px;transform:scaleX(1.0040);color:#000;">Track</span>
<div style="position:absolute;left:41px;top:518px;width:1px;height:17px;background:#e9e9e9"></div>
<div style="position:absolute;left:98px;top:518px;width:1px;height:17px;background:#e9e9e9"></div>
<span class="t" style="left:101.80px;top:517.79px;font-size:11px;transform:scaleX(0.9332);color:#000;">7.874mil</span>
<div style="position:absolute;left:155px;top:518px;width:1px;height:17px;background:#e9e9e9"></div>
<div style="position:absolute;left:212px;top:518px;width:1px;height:17px;background:#e9e9e9"></div>
<span class="t" style="left:215.80px;top:517.79px;font-size:11px;transform:scaleX(0.9850);color:#000;">TopOverlay</span>
<div style="position:absolute;left:5px;top:535px;width:270px;height:17px;background:#fafafa;overflow:hidden;"></div>
<div style="position:absolute;left:5px;top:551px;width:270px;height:1px;background:#e9e9e9"></div>
<span class="t" style="left:7.00px;top:534.79px;font-size:11px;transform:scaleX(1.0040);color:#000;">Track</span>
<div style="position:absolute;left:41px;top:535px;width:1px;height:17px;background:#e9e9e9"></div>
<div style="position:absolute;left:98px;top:535px;width:1px;height:17px;background:#e9e9e9"></div>
<span class="t" style="left:101.80px;top:534.79px;font-size:11px;transform:scaleX(0.9332);color:#000;">7.874mil</span>
<div style="position:absolute;left:155px;top:535px;width:1px;height:17px;background:#e9e9e9"></div>
<div style="position:absolute;left:212px;top:535px;width:1px;height:17px;background:#e9e9e9"></div>
<span class="t" style="left:215.80px;top:534.79px;font-size:11px;transform:scaleX(0.9850);color:#000;">TopOverlay</span>
<div style="position:absolute;left:5px;top:552px;width:270px;height:17px;background:#fafafa;overflow:hidden;"></div>
<div style="position:absolute;left:5px;top:568px;width:270px;height:1px;background:#e9e9e9"></div>
<span class="t" style="left:7.00px;top:551.79px;font-size:11px;transform:scaleX(1.0040);color:#000;">Track</span>
<div style="position:absolute;left:41px;top:552px;width:1px;height:17px;background:#e9e9e9"></div>
<div style="position:absolute;left:98px;top:552px;width:1px;height:17px;background:#e9e9e9"></div>
<span class="t" style="left:101.80px;top:551.79px;font-size:11px;transform:scaleX(0.9332);color:#000;">7.874mil</span>
<div style="position:absolute;left:155px;top:552px;width:1px;height:17px;background:#e9e9e9"></div>
<div style="position:absolute;left:212px;top:552px;width:1px;height:17px;background:#e9e9e9"></div>
<span class="t" style="left:215.80px;top:551.79px;font-size:11px;transform:scaleX(0.9850);color:#000;">TopOverlay</span>
<div style="position:absolute;left:5px;top:569px;width:270px;height:17px;background:#fafafa;overflow:hidden;"></div>
<div style="position:absolute;left:5px;top:585px;width:270px;height:1px;background:#e9e9e9"></div>
<span class="t" style="left:7.00px;top:568.79px;font-size:11px;transform:scaleX(1.0040);color:#000;">Track</span>
<div style="position:absolute;left:41px;top:569px;width:1px;height:17px;background:#e9e9e9"></div>
<div style="position:absolute;left:98px;top:569px;width:1px;height:17px;background:#e9e9e9"></div>
<span class="t" style="left:101.80px;top:568.79px;font-size:11px;transform:scaleX(0.9332);color:#000;">7.874mil</span>
<div style="position:absolute;left:155px;top:569px;width:1px;height:17px;background:#e9e9e9"></div>
<div style="position:absolute;left:212px;top:569px;width:1px;height:17px;background:#e9e9e9"></div>
<span class="t" style="left:215.80px;top:568.79px;font-size:11px;transform:scaleX(0.9850);color:#000;">TopOverlay</span>
<div style="position:absolute;left:5px;top:586px;width:270px;height:16px;background:#fafafa;overflow:hidden;"></div>
<span class="t" style="left:7.00px;top:585.79px;font-size:11px;transform:scaleX(1.0040);color:#000;">Track</span>
<div style="position:absolute;left:41px;top:586px;width:1px;height:16px;background:#e9e9e9"></div>
<div style="position:absolute;left:98px;top:586px;width:1px;height:16px;background:#e9e9e9"></div>
<span class="t" style="left:101.80px;top:585.79px;font-size:11px;transform:scaleX(0.9332);color:#000;">7.874mil</span>
<div style="position:absolute;left:155px;top:586px;width:1px;height:16px;background:#e9e9e9"></div>
<div style="position:absolute;left:212px;top:586px;width:1px;height:16px;background:#e9e9e9"></div>
<span class="t" style="left:215.80px;top:585.79px;font-size:11px;transform:scaleX(0.9850);color:#000;">TopOverlay</span>
<div style="position:absolute;left:275px;top:448px;width:1px;height:154px;background:#e0e0e0"></div>
<div style="position:absolute;left:276px;top:448px;width:17px;height:154px;background:#f0f0f0"></div><svg class="abs" style="left:281px;top:454px" width="8" height="5"><path d="M0.4 4.3L4 0.7L7.6 4.3z" fill="#4a4a4a"/></svg><svg class="abs" style="left:281px;top:591px" width="8" height="5"><path d="M0.6 0.8L4 4.2L7.4 0.8z" fill="#4a4a4a"/></svg><div style="position:absolute;left:278px;top:467px;width:14px;height:44px;box-sizing:border-box;border:1px solid #979797;border-radius:2px;background:linear-gradient(90deg,#f2f2f2,#e4e4e4 45%,#cfcfcf 50%,#dcdcdc)"></div><div style="position:absolute;left:281px;top:485.5px;width:8px;height:1px;background:#6a6a6a"></div><div style="position:absolute;left:281px;top:487.5px;width:8px;height:1px;background:#6a6a6a"></div><div style="position:absolute;left:281px;top:489.5px;width:8px;height:1px;background:#6a6a6a"></div><div style="position:absolute;left:281px;top:491.5px;width:8px;height:1px;background:#6a6a6a"></div>
<svg class="abs" style="left:296px;top:449px" width="9" height="6"><path d="M0.9 5L4.5 1.4L8.1 5" fill="none" stroke="#151515" stroke-width="2" stroke-linejoin="miter"/></svg>
<svg class="abs" style="left:296px;top:610px" width="9" height="6"><path d="M0.9 5L4.5 1.4L8.1 5" fill="none" stroke="#151515" stroke-width="2" stroke-linejoin="miter"/></svg>
<div style="position:absolute;left:5px;top:609px;width:288px;height:80px;background:linear-gradient(#3b3b3b,#222 50%,#0c0c0c)"></div>
<svg class="abs" style="left:5px;top:609px" width="288" height="80" viewBox="5 609 288 80"><rect x="91" y="612" width="8" height="8" fill="#fff"/><rect x="199.1" y="612" width="8" height="8" fill="#fff"/><rect x="91" y="678" width="8" height="8" fill="#fff"/><rect x="199.1" y="678" width="8" height="8" fill="#fff"/><g stroke="#ffff00" stroke-width="1" fill="none"><path d="M131.5 624.5H116.5V639M116.5 648.6v3.8M116.5 656.7V674.3H131.5M150.3 624.5H183M150.3 674.3H183"/></g><path d="M115.3 643l1.6 1.6-1.6 1.6-1.6-1.6z" fill="#ffff00"/><circle cx="141.6" cy="624.3" r="7.7" fill="#c0c0c0"/><circle cx="141.6" cy="624.3" r="4.8" fill="#008c8c"/><circle cx="141.6" cy="674" r="7.7" fill="#c0c0c0"/><circle cx="141.6" cy="674" r="4.8" fill="#008c8c"/><rect x="117.9" y="641.2" width="6.2" height="6.2" fill="#c0c0c0"/><circle cx="121" cy="644.3" r="2.1" fill="#008c8c"/><circle cx="129.3" cy="644.3" r="3.5" fill="#c0c0c0"/><circle cx="129.3" cy="644.3" r="2.1" fill="#008c8c"/><circle cx="121.5" cy="654.2" r="3.5" fill="#c0c0c0"/><circle cx="121.5" cy="654.2" r="2.1" fill="#008c8c"/><circle cx="129.3" cy="654.2" r="3.5" fill="#c0c0c0"/><circle cx="129.3" cy="654.2" r="2.1" fill="#008c8c"/><g fill="none" stroke="#fff" stroke-width="1"><rect x="95.5" y="616.5" width="109" height="66"/><rect x="98.5" y="619.5" width="103" height="61"/></g></svg>
<div style="position:absolute;left:311px;top:63px;width:1008px;height:30px;background:#f1f1f1"></div>
<div style="position:absolute;left:311px;top:63px;width:1008px;height:1px;background:#b4b4b4"></div>
<div style="position:absolute;left:311px;top:64px;width:1008px;height:1px;background:#fafafa"></div>
<div style="position:absolute;left:311px;top:92px;width:1008px;height:1px;background:#d8d8d8"></div>
<div style="position:absolute;left:314px;top:66px;width:55px;height:23px;box-sizing:border-box;border:1px solid #a4a4a4;border-radius:1px;background:linear-gradient(#f8f8f8,#ececec)"></div>
<div style="position:absolute;left:373px;top:66px;width:161px;height:23px;box-sizing:border-box;border:1px solid #a4a4a4;border-radius:1px;background:#ffffff"></div>
<div style="position:absolute;left:538px;top:66px;width:162px;height:23px;box-sizing:border-box;border:1px solid #a4a4a4;border-radius:1px;background:linear-gradient(#f8f8f8,#ececec)"></div>
<div style="position:absolute;left:704px;top:66px;width:188px;height:23px;box-sizing:border-box;border:1px solid #a4a4a4;border-radius:1px;background:linear-gradient(#f8f8f8,#ececec)"></div>
<div style="position:absolute;left:897px;top:66px;width:209px;height:23px;box-sizing:border-box;border:1px solid #a4a4a4;border-radius:1px;background:linear-gradient(#f8f8f8,#ececec)"></div>
<span class="t" style="left:339.30px;top:70.32px;font-size:11.5px;transform:scaleX(0.8541);">Home</span>
<span class="t" style="left:398.30px;top:70.32px;font-size:11.5px;transform:scaleX(0.9050);">AMP Serial Bus USB.PcbLib</span>
<span class="t" style="left:563.00px;top:70.32px;font-size:11.5px;transform:scaleX(0.9208);">AMP Serial Bus USB.SchLib</span>
<span class="t" style="left:729.50px;top:70.32px;font-size:11.5px;transform:scaleX(0.8629);">USB+</span>
<span class="t" style="left:755.80px;top:70.44px;font-size:12px;transform:scaleX(0.9950);">通用通讯接口封装</span>
<span class="t" style="left:855.00px;top:70.32px;font-size:11.5px;transform:scaleX(0.8994);">.PcbLib</span>
<span class="t" style="left:922.00px;top:70.32px;font-size:11.5px;transform:scaleX(0.8629);">USB+</span>
<span class="t" style="left:948.30px;top:70.44px;font-size:12px;transform:scaleX(0.9950);">通用通讯接口封装</span>
<span class="t" style="left:1048.00px;top:70.32px;font-size:11.5px;transform:scaleX(0.9057);">.PcbLib.htm</span>
<svg class="abs" style="left:318px;top:69px" width="18" height="18"><defs><linearGradient id="hp" x1="0" x2="1"><stop offset="0" stop-color="#f4c838"/><stop offset="1" stop-color="#a87008"/></linearGradient></defs><rect x="6.5" y="3.4" width="5" height="13.3" fill="url(#hp)"/><ellipse cx="9" cy="3.4" rx="2.5" ry="1.2" fill="#fae070"/><path d="M6.5 16.7h5" stroke="#7a5206" stroke-width="0.6"/><path d="M1.1 10.1L4.8 5.5L9.8 4.4V9.7L6.5 10.9L3.2 13z" fill="#2fae2f"/><path d="M1.1 10.1L3.2 13L6.5 10.9L9.8 9.7V8.4L6.2 9.6L3.4 11.4z" fill="#1c7c1c"/><path d="M10.2 4.6L16.5 5.5L16.9 10.5L10.7 8.8z" fill="#2a7ae4"/><path d="M10.7 8.8L16.9 10.5L16.8 9L10.6 7.4z" fill="#1a4ea8"/></svg>
<svg class="abs" style="left:377px;top:69px" width="19" height="17"><path d="M5.8 5.5L11.3 1.2L17.2 5.4L12.2 9.3z" fill="#1e1e20"/><path d="M5.8 5.5L12.2 9.3V11L5.8 7.2z" fill="#c4c4c4"/><path d="M12.2 9.3L17.2 5.4V7.2L12.2 11z" fill="#8a8a8a"/><path d="M8.5 4.6l2.6-2M10.5 5.6l2.8-2.2" stroke="#6a6a6a" stroke-width="0.7"/><rect x="3.3" y="10" width="8.4" height="5.2" fill="#6c6c6c"/><path d="M1.2 11h2.1M1.2 12.7h2.1M1.2 14.4h2.1M11.7 11h2.1M11.7 12.7h2.1M11.7 14.4h2.1" stroke="#111" stroke-width="0.9"/><path d="M3.3 15.2h8.4" stroke="#111" stroke-width="1"/></svg>
<svg class="abs" style="left:543px;top:69px" width="17" height="17"><defs><linearGradient id="sg" x1="0" x2="1"><stop offset="0" stop-color="#ffffff"/><stop offset="0.6" stop-color="#fff890"/><stop offset="1" stop-color="#ffe860"/></linearGradient></defs><path d="M3.8 1.4H10.7L13.7 4.3L11.4 6.3H3.8z" fill="#a8bcf4" stroke="#3a6fd8" stroke-width="0.9"/><path d="M2.2 2.4H3.8M13.7 4.3H15.2" stroke="#3a6fd8" stroke-width="0.9"/><rect x="5.2" y="10.2" width="8.3" height="5.3" fill="#a8d8c4" stroke="#2a60c8" stroke-width="1"/><path d="M3.1 12.3H5.2M3.1 14.4H5.2M13.5 10.6H16M13.5 12.4H16M13.5 14.4H16" stroke="#2a60c8" stroke-width="0.9"/><path d="M2.2 4.3H8.9L12.3 7.5L8.9 10.7H2.2z" fill="url(#sg)" stroke="#d06a00" stroke-width="1"/><path d="M0 5.4H2.2M0 9.3H2.2" stroke="#e08000" stroke-width="0.9"/></svg>
<svg class="abs" style="left:709px;top:69px" width="19" height="17"><path d="M5.8 5.5L11.3 1.2L17.2 5.4L12.2 9.3z" fill="#1e1e20"/><path d="M5.8 5.5L12.2 9.3V11L5.8 7.2z" fill="#c4c4c4"/><path d="M12.2 9.3L17.2 5.4V7.2L12.2 11z" fill="#8a8a8a"/><path d="M8.5 4.6l2.6-2M10.5 5.6l2.8-2.2" stroke="#6a6a6a" stroke-width="0.7"/><rect x="3.3" y="10" width="8.4" height="5.2" fill="#6c6c6c"/><path d="M1.2 11h2.1M1.2 12.7h2.1M1.2 14.4h2.1M11.7 11h2.1M11.7 12.7h2.1M11.7 14.4h2.1" stroke="#111" stroke-width="0.9"/><path d="M3.3 15.2h8.4" stroke="#111" stroke-width="1"/></svg>
<svg class="abs" style="left:902px;top:68px" width="18" height="19"><defs><linearGradient id="ig" x1="0" y1="0" x2="1" y2="1"><stop offset="0" stop-color="#fff6cc"/><stop offset="1" stop-color="#d4d4c0"/></linearGradient></defs><path d="M3.5 2.6H12.8L15.8 5.4V17.5H3.5z" fill="url(#ig)" stroke="#5a5a5a" stroke-width="1"/><path d="M12.8 2.6V5.4H15.8z" fill="#fff" stroke="#5a5a5a" stroke-width="0.8"/><path d="M0.6 11.5C1 7.5 4 5.6 7.5 5.6" stroke="#e8a820" stroke-width="1.1" fill="none"/><path d="M9.6 11.8A4 4 0 1 1 9.7 8.9L9.8 10H2.6" stroke="#1a3ee0" stroke-width="2" fill="none"/><path d="M4 6.6C5.5 5.2 8.5 4.8 9.8 6" stroke="#28b8f0" stroke-width="0.9" fill="none"/></svg>
<svg class="cv" style="position:absolute;left:311px;top:93px" width="1006" height="585" viewBox="311 93 1006 585">
<rect x="311" y="93" width="1006" height="585" fill="#6e6a6a"/>
<path d="M328 93h1v585h-1zM352 93h1v585h-1zM377 93h1v585h-1zM401 93h1v585h-1zM425 93h1v585h-1zM450 93h1v585h-1zM474 93h1v585h-1zM498 93h1v585h-1zM523 93h1v585h-1zM547 93h1v585h-1zM571 93h1v585h-1zM596 93h1v585h-1zM620 93h1v585h-1zM644 93h1v585h-1zM669 93h1v585h-1zM693 93h1v585h-1zM717 93h1v585h-1zM742 93h1v585h-1zM766 93h1v585h-1zM790 93h1v585h-1zM815 93h1v585h-1zM839 93h1v585h-1zM863 93h1v585h-1zM888 93h1v585h-1zM912 93h1v585h-1zM936 93h1v585h-1zM961 93h1v585h-1zM985 93h1v585h-1zM1009 93h1v585h-1zM1034 93h1v585h-1zM1058 93h1v585h-1zM1082 93h1v585h-1zM1107 93h1v585h-1zM1131 93h1v585h-1zM1156 93h1v585h-1zM1180 93h1v585h-1zM1204 93h1v585h-1zM1229 93h1v585h-1zM1253 93h1v585h-1zM1277 93h1v585h-1zM1302 93h1v585h-1zM311 102v1h1006v-1zM311 126v1h1006v-1zM311 151v1h1006v-1zM311 175v1h1006v-1zM311 199v1h1006v-1zM311 224v1h1006v-1zM311 248v1h1006v-1zM311 272v1h1006v-1zM311 297v1h1006v-1zM311 321v1h1006v-1zM311 345v1h1006v-1zM311 370v1h1006v-1zM311 394v1h1006v-1zM311 418v1h1006v-1zM311 443v1h1006v-1zM311 467v1h1006v-1zM311 492v1h1006v-1zM311 516v1h1006v-1zM311 540v1h1006v-1zM311 565v1h1006v-1zM311 589v1h1006v-1zM311 613v1h1006v-1zM311 638v1h1006v-1zM311 662v1h1006v-1z" fill="#939091" shape-rendering="crispEdges"/>
<line x1="1132" y1="138.5" x2="1132" y2="602" stroke="#ff00ff" stroke-width="4" stroke-linecap="round"/>
<path d="M648.5 138.5H514V275.5" stroke="#ffff00" stroke-width="8" stroke-linecap="round" stroke-linejoin="round" fill="none"/>
<path d="M514 368V395" stroke="#ffff00" stroke-width="8" stroke-linecap="round" stroke-linejoin="round" fill="none"/>
<path d="M514 441V602H648.5" stroke="#ffff00" stroke-width="8" stroke-linecap="round" stroke-linejoin="round" fill="none"/>
<path d="M825 138.5H1131" stroke="#ffff00" stroke-width="8" stroke-linecap="round" stroke-linejoin="round" fill="none"/>
<path d="M825 602H1131" stroke="#ffff00" stroke-width="8" stroke-linecap="round" stroke-linejoin="round" fill="none"/>
<circle cx="504.5" cy="322.3" r="9.6" fill="#ffff00"/>
<rect x="524" y="290" width="65.5" height="65.5" fill="#c0c0c0" stroke="#800080" stroke-width="4"/>
<circle cx="556.5" cy="322.3" r="17.4" fill="#008c8c"/>
<text transform="translate(556.5 329.6) scale(0.73 1)" text-anchor="middle" font-size="20.5" fill="#ffe58a">1</text>
<circle cx="632.8" cy="322.3" r="32.2" fill="#c0c0c0" stroke="#800080" stroke-width="3.6"/>
<circle cx="632.8" cy="322.3" r="17.2" fill="#008c8c"/>
<text transform="translate(632.8 329.6) scale(0.73 1)" text-anchor="middle" font-size="20.5" fill="#ffe58a">4</text>
<circle cx="556.5" cy="418.2" r="32.2" fill="#c0c0c0" stroke="#800080" stroke-width="3.6"/>
<circle cx="556.5" cy="418.2" r="17.2" fill="#008c8c"/>
<text transform="translate(556.5 425.5) scale(0.73 1)" text-anchor="middle" font-size="20.5" fill="#ffe58a">2</text>
<circle cx="632.8" cy="418.2" r="32.2" fill="#c0c0c0" stroke="#800080" stroke-width="3.6"/>
<circle cx="632.8" cy="418.2" r="17.2" fill="#008c8c"/>
<text transform="translate(632.8 425.5) scale(0.73 1)" text-anchor="middle" font-size="20.5" fill="#ffe58a">3</text>
<circle cx="737" cy="139.2" r="74.3" fill="#c0c0c0" stroke="#800080" stroke-width="3.4"/>
<circle cx="737" cy="139.2" r="44" fill="#008c8c"/>
<text transform="translate(736.2 157.79999999999998) scale(0.78 1)" text-anchor="middle" font-size="52" fill="#ffe58a">5</text>
<circle cx="737" cy="601.5" r="74.3" fill="#c0c0c0" stroke="#800080" stroke-width="3.4"/>
<circle cx="737" cy="601.5" r="44" fill="#008c8c"/>
<text transform="translate(736.2 620.1) scale(0.78 1)" text-anchor="middle" font-size="52" fill="#ffe58a">6</text>
<g stroke="#ffffff" stroke-width="1" fill="none"><circle cx="1131.8" cy="370.4" r="19.8"/><path d="M1111.3 350l41 41M1152.3 350l-41 41"/></g>
<text transform="translate(1120 588) rotate(-90)" font-size="15" fill="#ff00ff" stroke="#ff00ff" stroke-width="0.3" letter-spacing="1.2" textLength="75" lengthAdjust="spacing">PCB Edge</text>
</svg>
<div style="position:absolute;left:1317px;top:93px;width:2px;height:603px;background:#f0f0f0"></div>
<div style="position:absolute;left:311px;top:678px;width:1006px;height:18px;background:linear-gradient(#fafafa,#e6e6e6 12%,#ebebeb 40%,#ededed)"></div>
<div style="position:absolute;left:311px;top:694px;width:925px;height:1px;background:#d4d4d4"></div>
<div style="position:absolute;left:311px;top:695px;width:925px;height:1px;background:#a6a6a6"></div>
<svg class="abs" style="left:316.5px;top:682.6px" width="5" height="8"><path d="M4.5 0.5L0.5 4l4 3.5z" fill="#404040"/></svg>
<svg class="abs" style="left:1306.5px;top:682.6px" width="5" height="8"><path d="M0.5 0.5L4.5 4l-4 3.5z" fill="#404040"/></svg>
<div style="position:absolute;left:803px;top:679px;width:15px;height:15px;box-sizing:border-box;border:1px solid #979797;border-radius:2px;background:linear-gradient(#f4f4f4,#e6e6e6 45%,#d2d2d2 50%,#dcdcdc)"></div>
<span class="t" style="left:1219.00px;top:673.72px;font-size:11.5px;transform:scaleX(0.9033);color:#efefef;text-shadow:-0.8px -0.8px 0 #505050,0 0 1px #888;">CSDN @GJZGRB</span>
<svg class="abs" style="left:1309px;top:670px" width="10" height="26"><circle cx="30.9" cy="21" r="26.7" fill="#f2f2f6" stroke="#2a8cf6" stroke-width="2"/></svg>
<div style="position:absolute;left:1262px;top:69px;width:70px;height:38px;background:linear-gradient(#ffffff,#f2f2f2);border-radius:4px;box-shadow:0 1px 4px rgba(0,0,0,0.35)"></div>
<svg class="abs" style="left:1283.5px;top:76.6px" width="7" height="22"><path d="M3.5 0L6.8 3.6H4.7V7.2H2.3V3.6H0.2z" fill="#e8503a"/><path d="M3.5 21.6L6.8 18H4.7V14.4H2.3V18H0.2z" fill="#2a9a4a"/></svg>
<span class="t" style="left:1303.20px;top:72.51px;font-size:9.5px;transform:scaleX(1.0500);color:#111;">0.2K</span>
<span class="t" style="left:1303.20px;top:87.01px;font-size:9.5px;transform:scaleX(1.0500);color:#111;">0.5K</span>
<svg class="abs" style="left:1231px;top:62px" width="50" height="50"><defs><linearGradient id="wg" x1="0" y1="0" x2="0" y2="1"><stop offset="0" stop-color="#6fdc80"/><stop offset="0.5" stop-color="#4cc860"/><stop offset="1" stop-color="#44c45a"/></linearGradient><clipPath id="wc"><circle cx="25" cy="24.8" r="21.3"/></clipPath></defs><circle cx="25" cy="25.4" r="24.6" fill="rgba(0,0,0,0.22)"/><circle cx="25" cy="24.8" r="24" fill="#fafafa"/><circle cx="25" cy="24.8" r="22.2" fill="#0e8a4a"/><g clip-path="url(#wc)"><rect x="0" y="0" width="50" height="50" fill="url(#wg)"/><rect x="0" y="0" width="50" height="15.2" fill="#3f936a"/><rect x="0" y="14.4" width="50" height="0.9" fill="#1f8a50"/><ellipse cx="24" cy="9" rx="12" ry="4" fill="#6ab08c" opacity="0.6"/><ellipse cx="27" cy="8.2" rx="2.6" ry="1" fill="#e8f8ee"/><circle cx="20" cy="9" r="0.8" fill="#d8f0e0"/></g><text x="24.6" y="29.3" text-anchor="middle" font-size="14" fill="#fff">72%</text></svg></svg>
</body></html>
